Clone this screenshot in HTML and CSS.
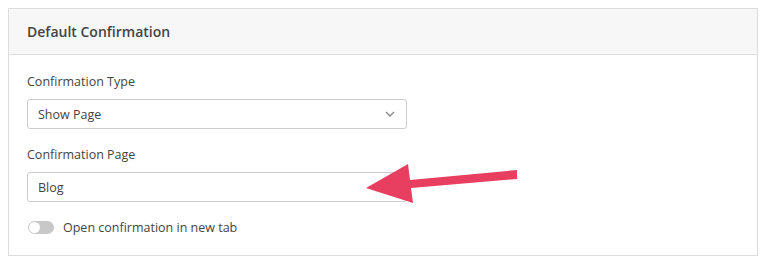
FILE: index.html
```html
<!DOCTYPE html>
<html>
<head>
<meta charset="utf-8">
<link rel="stylesheet" href="styles.css">
</head>
<body>
<div class="panel">
  <div class="panel-header">Default Confirmation</div>
  <div class="panel-body">
    <div class="field">
      <div class="label">Confirmation Type</div>
      <div class="select">
        <span>Show Page</span>
        <svg class="chev" width="10" height="6" viewBox="0 0 10 6"><path d="M1 1 L5 5 L9 1" fill="none" stroke="#888" stroke-width="1.3"/></svg>
      </div>
    </div>
    <div class="field">
      <div class="label">Confirmation Page</div>
      <div class="input">Blog</div>
    </div>
    <div class="toggle-row">
      <span class="toggle"><span class="knob"></span></span>
      <span class="toggle-label">Open confirmation in new tab</span>
    </div>
  </div>
</div>
<svg class="arrow" width="768" height="265" viewBox="0 0 768 265">
  <polygon points="366,188 408,164 410,180 517,170 517,179 411,188 413,203" fill="#e83e5f"/>
</svg>
</body>
</html>
```
FILE: styles.css
```css
body {
  margin: 8px;
  font-family: "Open Sans", "Noto Sans", sans-serif;
  color: #444;
  background: #fff;
}
.panel {
  width: 748px;
  height: 246px;
  border: 1px solid #ddd;
  background: #fff;
}
.panel-header {
  background: #f7f7f7;
  border-bottom: 1px solid #ddd;
  box-sizing: border-box;
  height: 46px;
  display: flex;
  align-items: center;
  padding-left: 18px;
  font-size: 14px;
  font-weight: 600;
  color: #444;
}
.panel-body {
  padding: 18px 18px 0 18px;
}
.field {
  margin-bottom: 17px;
}
.label {
  font-size: 12.5px;
  line-height: 18px;
  color: #444;
  margin-bottom: 8px;
}
.select, .input {
  width: 380px;
  height: 30px;
  box-sizing: border-box;
  border: 1px solid #ccc;
  border-radius: 3px;
  display: flex;
  align-items: center;
  padding: 0 10px;
  font-size: 12.5px;
  color: #444;
  justify-content: space-between;
}
.chev { margin-right: 1px; }
.toggle-row {
  display: flex;
  align-items: center;
  margin-top: 17px;
}
.toggle {
  width: 26px;
  height: 13px;
  border-radius: 7px;
  background: #c8c8c8;
  position: relative;
  margin-left: 1px;
  margin-right: 9px;
}
.knob {
  position: absolute;
  left: 1px;
  top: 1px;
  width: 11px;
  height: 11px;
  border-radius: 50%;
  background: #fff;
}
.toggle-label {
  font-size: 12.5px;
  color: #444;
}
.arrow {
  position: absolute;
  left: 0;
  top: 0;
}
```
